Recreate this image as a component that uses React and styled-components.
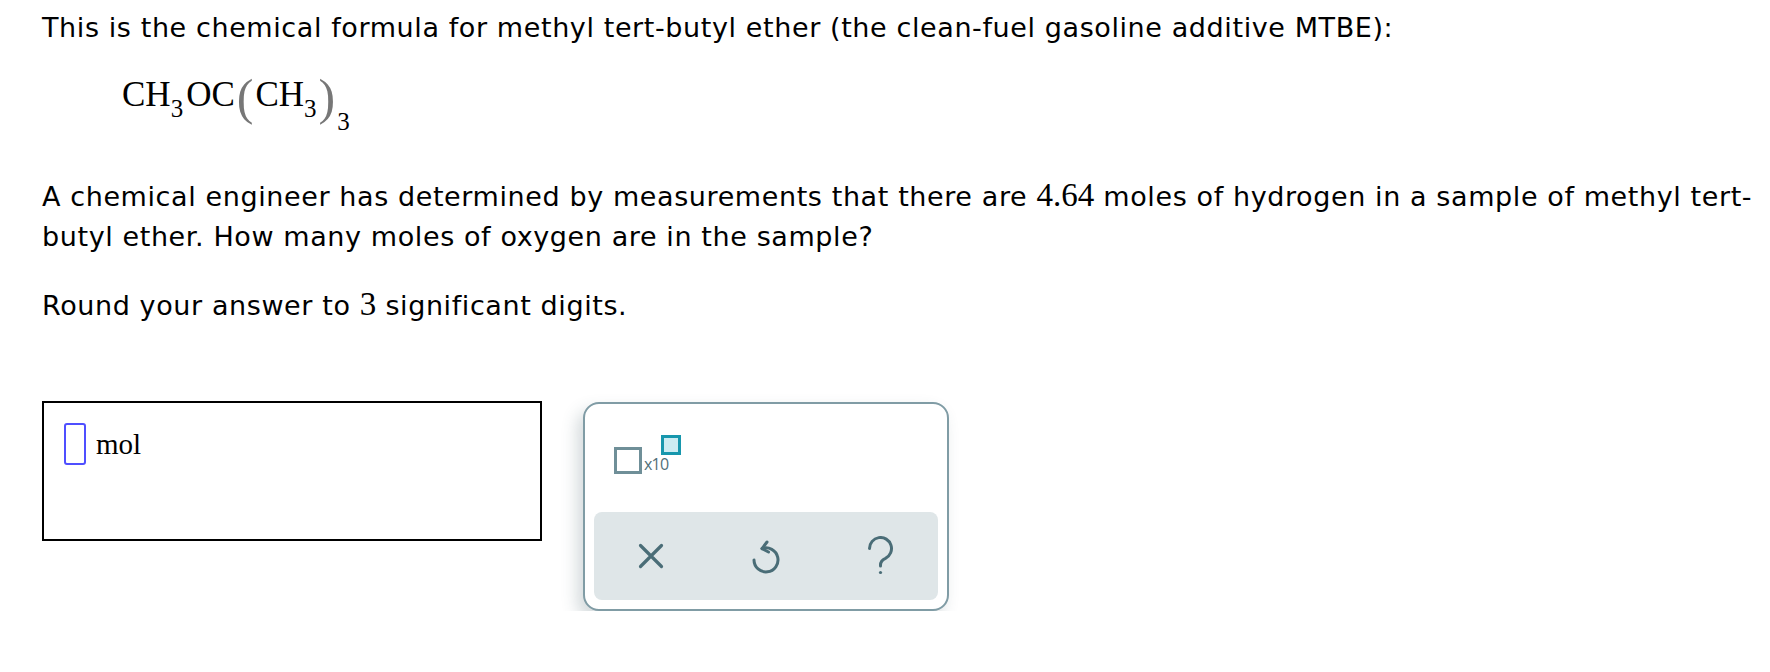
import React from 'react'
import styled, { createGlobalStyle } from 'styled-components'

const GlobalStyle = createGlobalStyle`
	body {
		margin: 0;
		background: #fff;
	}
`

const Page = styled.div`
	width: 1722px;
	padding: 8px 0 0 42px;
	font-family: "DejaVu Sans", Verdana, sans-serif;
	font-size: 27px;
	line-height: 40px;
	letter-spacing: 0.6px;
	color: #000;
`

const Para = styled.p`
	margin: ${props => props.$top || 0}px 0 0;
`

const Num = styled.span`
	font-family: "Liberation Serif", "Times New Roman", serif;
	font-size: 33px;
	line-height: 1;
	letter-spacing: 0;
`

const Formula = styled.div`
	height: 40px;
	margin-top: 27px;
	padding-left: 80px;
	font-family: "Liberation Serif", "Times New Roman", serif;
	font-size: 35px;
	line-height: 40px;
	letter-spacing: 0;
	white-space: nowrap;
`

const Sub = styled.span`
	font-size: 25px;
	line-height: 0;
	vertical-align: ${props => props.$drop}px;
	margin-right: ${props => props.$gap || 0}px;
`

const Paren = styled.span`
	font-size: 50px;
	line-height: 0;
	color: #777;
	vertical-align: -8px;
	margin: 0 2px;
`

const AnswerRow = styled.div`
	display: flex;
	align-items: flex-start;
	gap: 41px;
	margin-top: 75px;
`

const AnswerBox = styled.div`
	box-sizing: border-box;
	width: 500px;
	height: 140px;
	border: 2px solid #000;
	padding: 20px;
	display: flex;
	align-items: flex-start;
	gap: 10px;
`

const Cursor = styled.div`
	box-sizing: border-box;
	width: 22px;
	height: 42px;
	border: 2px solid #4f4fff;
	border-radius: 3px;
`

const Unit = styled.span`
	margin-top: 7px;
	font-family: "Liberation Serif", "Times New Roman", serif;
	font-size: 29px;
	line-height: 29px;
	letter-spacing: 0;
`

const Panel = styled.div`
	box-sizing: border-box;
	width: 366px;
	height: 209px;
	margin-top: 1px;
	border: 2px solid #809ca5;
	border-radius: 16px;
	padding: 0 9px 9px;
	display: flex;
	flex-direction: column;
	background: #fff;
	box-shadow: -6px 8px 16px rgba(60, 85, 95, 0.22);
`

const PanelTop = styled.div`
	flex: 1;
	padding: 31px 0 0 20px;
`

const SciButton = styled.div`
	display: inline-flex;
	align-items: flex-start;
`

const BigSquare = styled.div`
	box-sizing: border-box;
	width: 28px;
	height: 27px;
	margin-top: 12px;
	border: 3px solid #6f8f98;
`

const TenLabel = styled.span`
	margin: 21px 0 0 2px;
	font-family: "Open Sans", Lato, sans-serif;
	font-size: 16px;
	font-weight: 500;
	line-height: 16px;
	color: #4f6f78;
	letter-spacing: -0.8px;
`

const SmallSquare = styled.div`
	box-sizing: border-box;
	width: 20px;
	height: 20px;
	margin-left: -7px;
	border: 3px solid #1797ad;
	background: #ccecf2;
`

const Toolbar = styled.div`
	height: 88px;
	border-radius: 8px;
	background: #dfe6e8;
	display: flex;
`

const ToolButton = styled.button`
	flex: 1;
	border: none;
	background: transparent;
	padding: 0;
	display: flex;
	align-items: center;
	justify-content: center;
	color: #4a6d77;
	cursor: pointer;
`

const ClearIcon = () =>
	<svg width="28" height="28" viewBox="0 0 28 28" fill="none" stroke="currentColor" strokeWidth="3.2" strokeLinecap="round">
		<path d="M3.5 3.5 L24.5 24.5 M24.5 3.5 L3.5 24.5" />
	</svg>

const UndoIcon = () =>
	<svg width="30" height="36" viewBox="0 0 30 36" fill="none" stroke="currentColor" strokeWidth="3" strokeLinecap="round" strokeLinejoin="round">
		<path d="M11 10.6 A12 12 0 1 1 3 22" />
		<path d="M16 4 L11 10.6 L17.5 14" />
	</svg>

const HelpIcon = () =>
	<svg width="28" height="40" viewBox="0 0 28 40" fill="none" stroke="currentColor" strokeWidth="3" strokeLinecap="round">
		<path d="M2.5 12.5 A11 11 0 1 1 18.5 22.3 Q13.5 24.5 13.5 29 V30" />
		<circle cx="13.5" cy="36.5" r="1.6" fill="currentColor" stroke="none" />
	</svg>

const App = () =>
	<Page>
		<GlobalStyle />
		<Para>This is the chemical formula for methyl tert-butyl ether (the clean-fuel gasoline additive MTBE):</Para>
		<Formula>
			CH<Sub $drop={-11} $gap={3}>3</Sub>OC<Paren>(</Paren>CH<Sub $drop={-11}>3</Sub><Paren>)</Paren><Sub $drop={-24}>3</Sub>
		</Formula>
		<Para $top={62}>
			A chemical engineer has determined by measurements that there are <Num>4.64</Num> moles of hydrogen in a sample of methyl tert-butyl ether. How many moles of oxygen are in the sample?
		</Para>
		<Para $top={29}>Round your answer to <Num>3</Num> significant digits.</Para>
		<AnswerRow>
			<AnswerBox>
				<Cursor />
				<Unit>mol</Unit>
			</AnswerBox>
			<Panel>
				<PanelTop>
					<SciButton>
						<BigSquare />
						<TenLabel>x10</TenLabel>
						<SmallSquare />
					</SciButton>
				</PanelTop>
				<Toolbar>
					<ToolButton aria-label="clear"><ClearIcon /></ToolButton>
					<ToolButton aria-label="undo"><UndoIcon /></ToolButton>
					<ToolButton aria-label="help"><HelpIcon /></ToolButton>
				</Toolbar>
			</Panel>
		</AnswerRow>
	</Page>

export default App
